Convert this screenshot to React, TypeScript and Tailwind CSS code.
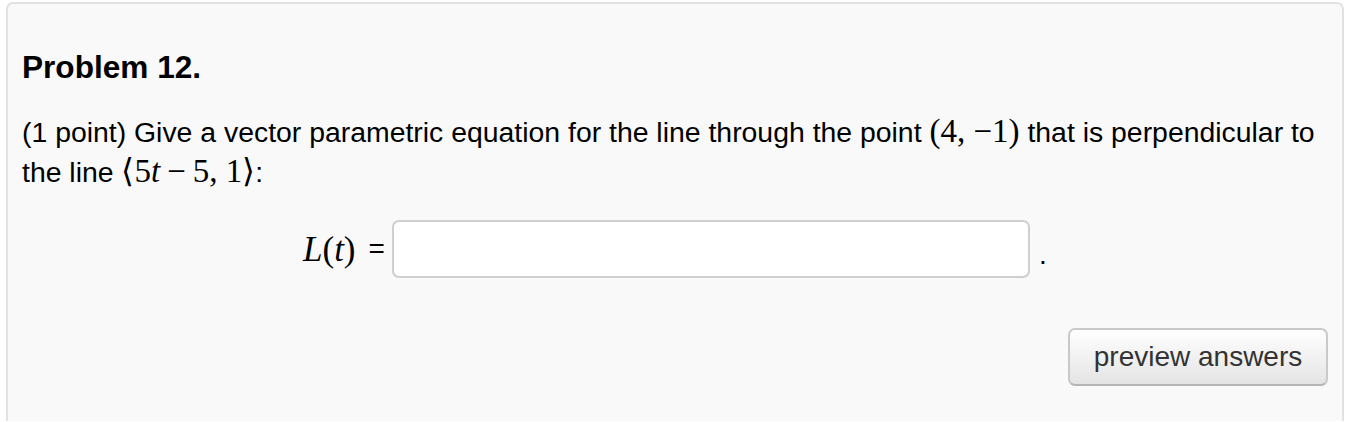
import React from "react";

export default function App() {
  const sans = { fontFamily: '"Liberation Sans", Arial, sans-serif' } as React.CSSProperties;
  return (
    <div className="w-[1348px] h-[422px] bg-white overflow-hidden pt-[2px] pl-[6px] pr-[4px]" style={sans}>
      <div className="h-[419px] bg-[#f9f9f9] border-2 border-b-0 border-[#e2e2e2] rounded-t-[7px] px-[14px] text-black">
        <h3 className="pt-[45px] text-[31.6px] font-bold leading-[36px]">Problem 12.</h3>
        <p className="mt-[27px] text-[28.4px] leading-[40px]">
          (1 point) Give a vector parametric equation for the line through the point{" "}
          <span className="font-['Liberation_Serif'] text-[33px] leading-none">(4, −1)</span> that is perpendicular to
          the line{" "}
          <span className="font-['Liberation_Serif'] text-[33px] leading-none">
            ⟨5<i>t</i>
            <span className="px-[7px]">−</span>5, 1⟩
          </span>
          :
        </p>
        <div className="mt-[28px] flex items-center">
          <span className="ml-[281px] font-['Liberation_Serif'] text-[35px] leading-none mr-[13px]">
            <i>L</i>(<i>t</i>)
          </span>
          <span className="text-[28px] leading-none mr-[7px]">=</span>
          <div className="w-[638px] h-[58px] bg-white border-2 border-[#cfcfcf] rounded-[7px]" />
          <span className="text-[28px] leading-none ml-[9px] mt-[12px]">.</span>
        </div>
        <div className="mt-[50px] flex justify-end">
          <button className="w-[260px] h-[58px] rounded-[7px] border-2 border-[#c9c9c9] border-b-[#b5b5b5] bg-gradient-to-b from-white to-[#e4e4e4] text-[28px] leading-none text-[#333]">
            preview answers
          </button>
        </div>
      </div>
    </div>
  );
}
